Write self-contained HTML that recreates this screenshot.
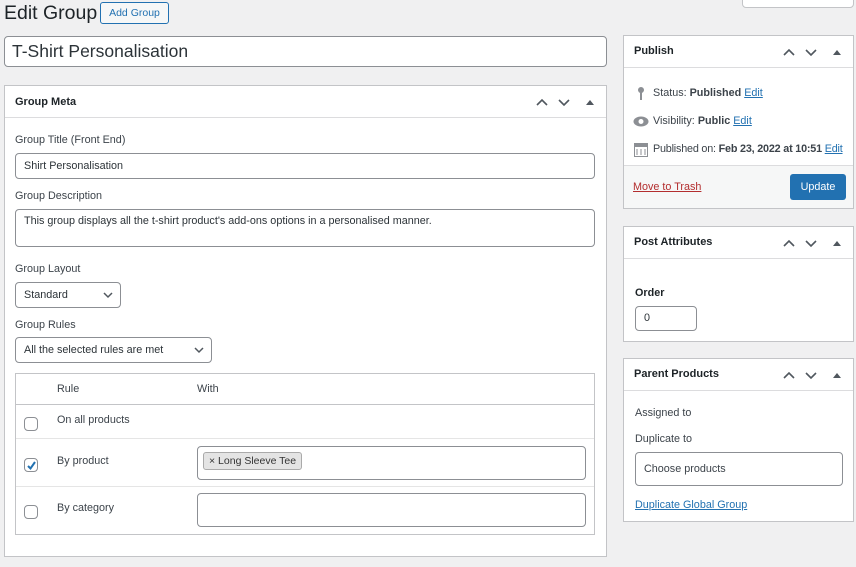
<!DOCTYPE html>
<html><head><meta charset="utf-8"><style>
*{box-sizing:border-box;margin:0;padding:0}
body{width:856px;height:567px;background:#f0f0f1;font-family:"Liberation Sans",sans-serif;color:#3c434a;font-size:10.8px;position:relative;overflow:hidden}
.a{position:absolute}
.box{position:absolute;background:#fff;border:1px solid #c3c4c7}
.hd{position:absolute;left:0;right:0;top:0;height:32px;border-bottom:1px solid #dcdcde;font-weight:bold;font-size:11px;color:#1d2327;padding:10px 0 0 10px}
.inp{position:absolute;background:#fff;border:1px solid #8c8f94;border-radius:4px;font-size:10.8px;color:#2c3338;padding:0 8px}
.ctl{position:absolute;right:10px;top:10px;width:60px;height:12px}
a{color:#2271b1;text-decoration:underline}
.cb{position:absolute;width:14px;height:14px;border:1px solid #8c8f94;border-radius:4px;background:#fff}
</style></head><body>
<div class="a" style="left:4px;top:2px;font-size:19.5px;color:#1d2327">Edit Group</div>
<div class="a" style="left:100px;top:2px;width:69px;height:22px;border:1px solid #2271b1;border-radius:3px;color:#2271b1;font-size:10.5px;text-align:center;line-height:20px;background:#f6f7f7">Add Group</div>
<div class="a" style="left:742px;top:-4px;width:112px;height:12px;background:#fff;border:1px solid #c3c4c7;border-radius:4px"></div>
<div class="inp" style="left:4px;top:36px;width:603px;height:31px;font-size:17.5px;line-height:29px;padding-left:7px;color:#2c3338">T-Shirt Personalisation</div>

<div class="box" style="left:4px;top:85px;width:603px;height:472px">
<div class="hd">Group Meta</div>
<svg class="ctl" viewBox="0 0 60 12"><path d="M1 9L6 4L11 9" stroke="#50575e" stroke-width="1.6" fill="none"/><path d="M23 4L28 9L33 4" stroke="#50575e" stroke-width="1.6" fill="none"/><path d="M50 9L54 4L58 9Z" fill="#50575e"/></svg>
<div class="a" style="left:10px;top:48px">Group Title (Front End)</div>
<div class="inp" style="left:10px;top:67px;width:580px;height:26px;line-height:24px">Shirt Personalisation</div>
<div class="a" style="left:10px;top:104px">Group Description</div>
<div class="inp" style="left:10px;top:123px;width:580px;height:38px;padding-top:5px">This group displays all the t-shirt product's add-ons options in a personalised manner.</div>
<div class="a" style="left:10px;top:177px">Group Layout</div>
<div class="inp" style="left:10px;top:196px;width:106px;height:26px;line-height:24px">Standard<svg class="a" style="right:7px;top:8px" width="10" height="8"><path d="M1 2L5 6L9 2" stroke="#50575e" stroke-width="1.5" fill="none"/></svg></div>
<div class="a" style="left:10px;top:233px">Group Rules</div>
<div class="inp" style="left:10px;top:251px;width:197px;height:26px;line-height:24px">All the selected rules are met<svg class="a" style="right:7px;top:8px" width="10" height="8"><path d="M1 2L5 6L9 2" stroke="#50575e" stroke-width="1.5" fill="none"/></svg></div>
<div class="a" style="left:10px;top:287px;width:580px;height:162px;border:1px solid #c3c4c7">
<div class="a" style="left:41px;top:9px">Rule</div><div class="a" style="left:181px;top:9px">With</div>
<div class="a" style="left:0;right:0;top:30px;border-top:1px solid #c3c4c7"></div>
<div class="cb" style="left:8px;top:43px"></div><div class="a" style="left:41px;top:40px">On all products</div>
<div class="a" style="left:0;right:0;top:64px;border-top:1px solid #e5e5e5"></div>
<div class="cb" style="left:8px;top:84px"></div><svg class="a" style="left:9px;top:85px" width="13" height="13"><path d="M3 7L5.5 9.5L10 3" stroke="#2271b1" stroke-width="2" fill="none"/></svg>
<div class="a" style="left:41px;top:81px">By product</div>
<div class="a" style="left:181px;top:72px;width:389px;height:34px;border:1px solid #8c8f94;border-radius:4px">
<div class="a" style="left:5px;top:5px;height:18px;padding:0 5px;border:1px solid #aaa;border-radius:3px;background:#e4e4e4;font-size:10.5px;line-height:16px;color:#333">× Long Sleeve Tee</div></div>
<div class="a" style="left:0;right:0;top:112px;border-top:1px solid #e5e5e5"></div>
<div class="cb" style="left:8px;top:131px"></div><div class="a" style="left:41px;top:128px">By category</div>
<div class="a" style="left:181px;top:119px;width:389px;height:34px;border:1px solid #8c8f94;border-radius:4px"></div>
</div></div>

<div class="box" style="left:623px;top:35px;width:231px;height:174px">
<div class="hd" style="padding-top:9px">Publish</div>
<svg class="ctl" viewBox="0 0 60 12"><path d="M1 9L6 4L11 9" stroke="#50575e" stroke-width="1.6" fill="none"/><path d="M23 4L28 9L33 4" stroke="#50575e" stroke-width="1.6" fill="none"/><path d="M50 9L54 4L58 9Z" fill="#50575e"/></svg>
<svg class="a" style="left:12px;top:50px" width="10" height="14"><circle cx="5" cy="4" r="3" fill="#8c8f94"/><rect x="4" y="6" width="2" height="8" fill="#8c8f94"/></svg>
<div class="a" style="left:29px;top:51px">Status: <b>Published</b> <a>Edit</a></div>
<svg class="a" style="left:9px;top:80px" width="16" height="11"><ellipse cx="8" cy="5.5" rx="7.5" ry="5" fill="#8c8f94"/><circle cx="8" cy="5.5" r="2.5" fill="#fff"/></svg>
<div class="a" style="left:29px;top:79px">Visibility: <b>Public</b> <a>Edit</a></div>
<svg class="a" style="left:10px;top:105px" width="14" height="16"><rect x="0.5" y="2.5" width="13" height="13" fill="none" stroke="#8c8f94"/><rect x="0" y="2" width="14" height="4" fill="#8c8f94"/><path d="M3 8v6M7 8v6M11 8v6" stroke="#8c8f94"/></svg>
<div class="a" style="left:29px;top:107px;white-space:nowrap;letter-spacing:-0.2px">Published on: <b>Feb 23, 2022 at 10:51</b> <a>Edit</a></div>
<div class="a" style="left:0;right:0;top:129px;bottom:0;background:#f6f7f7;border-top:1px solid #dcdcde"></div>
<a class="a" style="left:9px;top:145px;color:#b32d2e">Move to Trash</a>
<div class="a" style="left:166px;top:138px;width:56px;height:26px;background:#2271b1;border-radius:3px;color:#fff;text-align:center;line-height:26px">Update</div>
</div>

<div class="box" style="left:623px;top:226px;width:231px;height:116px">
<div class="hd" style="padding-top:9px">Post Attributes</div>
<svg class="ctl" viewBox="0 0 60 12"><path d="M1 9L6 4L11 9" stroke="#50575e" stroke-width="1.6" fill="none"/><path d="M23 4L28 9L33 4" stroke="#50575e" stroke-width="1.6" fill="none"/><path d="M50 9L54 4L58 9Z" fill="#50575e"/></svg>
<div class="a" style="left:11px;top:60px;font-weight:bold;color:#1d2327">Order</div>
<div class="inp" style="left:11px;top:79px;width:62px;height:25px;line-height:23px">0</div>
</div>

<div class="box" style="left:623px;top:358px;width:231px;height:164px">
<div class="hd" style="padding-top:9px">Parent Products</div>
<svg class="ctl" viewBox="0 0 60 12"><path d="M1 9L6 4L11 9" stroke="#50575e" stroke-width="1.6" fill="none"/><path d="M23 4L28 9L33 4" stroke="#50575e" stroke-width="1.6" fill="none"/><path d="M50 9L54 4L58 9Z" fill="#50575e"/></svg>
<div class="a" style="left:11px;top:48px">Assigned to</div>
<div class="a" style="left:11px;top:74px">Duplicate to</div>
<div class="inp" style="left:11px;top:93px;width:208px;height:34px;line-height:32px;color:#3c434a">Choose products</div>
<a class="a" style="left:11px;top:140px">Duplicate Global Group</a>
</div>
</body></html>
